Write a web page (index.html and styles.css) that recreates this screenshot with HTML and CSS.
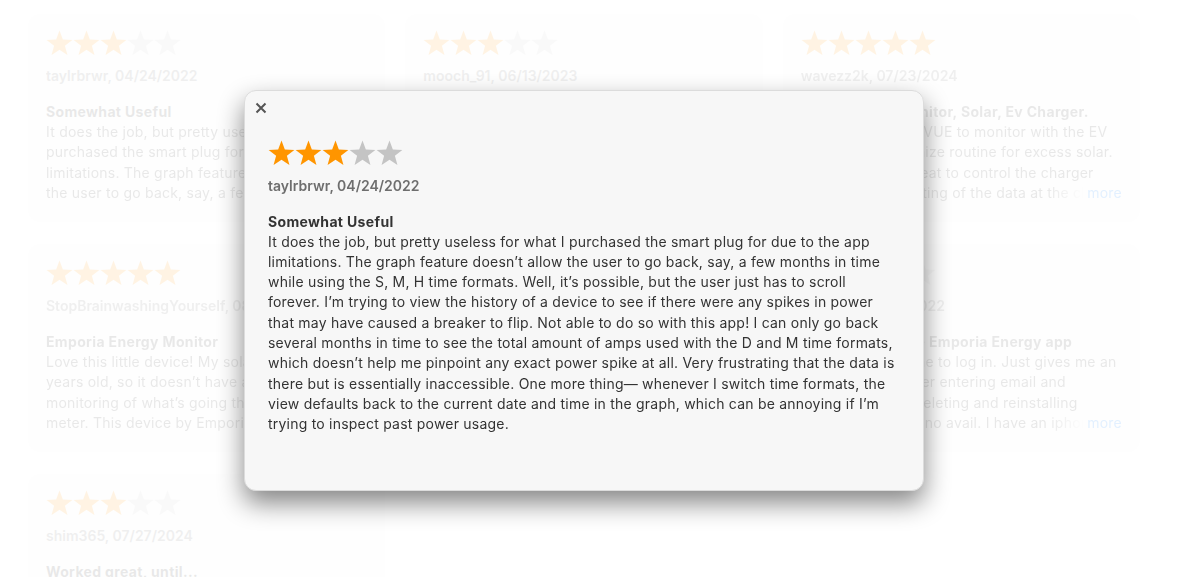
FILE: index.html
```html
<!DOCTYPE html>
<html>
    <head>
        <title>Reviews</title>
        <meta charset="utf-8" />
        <link rel="stylesheet" href="styles.css">
    </head>
    <body>
        <svg class="defs" width="0" height="0">
            <symbol id="star" viewBox="0.5 0.5 23 23">
                <polygon points="12,1 14.84,8.59 22.94,8.95 16.59,13.99 18.76,21.8 12,17.33 5.24,21.8 7.41,13.99 1.06,8.95 9.16,8.59" />
            </symbol>
        </svg>

        <div class="page">
            <div class="reviews">

                <div class="card">
                    <div class="stars">
                        <svg class="on"><use href="#star" /></svg><svg class="on"><use href="#star" /></svg><svg class="on"><use href="#star" /></svg><svg><use href="#star" /></svg><svg><use href="#star" /></svg>
                    </div>
                    <div class="author">taylrbrwr, 04/24/2022</div>
                    <div class="title">Somewhat Useful</div>
                    <div class="body">
                        <p>It does the job, but pretty useless for what I purchased the smart plug for due to the app limitations. The graph feature doesn’t allow the user to go back, say, a few months in time while using the S, M, H time formats.</p>
                        <span class="more">more</span>
                    </div>
                </div>

                <div class="card">
                    <div class="stars">
                        <svg class="on"><use href="#star" /></svg><svg class="on"><use href="#star" /></svg><svg class="on"><use href="#star" /></svg><svg><use href="#star" /></svg><svg><use href="#star" /></svg>
                    </div>
                    <div class="author">mooch_91, 06/13/2023</div>
                    <div class="title">Good hardware, app needs work</div>
                    <div class="body">
                        <p>The monitor itself installed easily and reads accurately, but the app is slow to load history and the graphs reset every time you switch views. Would be five stars with a better app.</p>
                        <span class="more">more</span>
                    </div>
                </div>

                <div class="card">
                    <div class="stars">
                        <svg class="on"><use href="#star" /></svg><svg class="on"><use href="#star" /></svg><svg class="on"><use href="#star" /></svg><svg class="on"><use href="#star" /></svg><svg class="on"><use href="#star" /></svg>
                    </div>
                    <div class="author">wavezz2k, 07/23/2024</div>
                    <div class="title">Great Energy Monitor, Solar, Ev Charger.</div>
                    <div class="body">
                        <p>I use the Emporia VUE to monitor with the EV charger and optimize routine for excess solar. The app works great to control the charger but the slow updating of the data at the cloud level is annoying.</p>
                        <span class="more">more</span>
                    </div>
                </div>

                <div class="card">
                    <div class="stars">
                        <svg class="on"><use href="#star" /></svg><svg class="on"><use href="#star" /></svg><svg class="on"><use href="#star" /></svg><svg class="on"><use href="#star" /></svg><svg class="on"><use href="#star" /></svg>
                    </div>
                    <div class="author">StopBrainwashingYourself, 08/02/2023</div>
                    <div class="title">Emporia Energy Monitor</div>
                    <div class="body">
                        <p>Love this little device! My solar system is ten years old, so it doesn’t have any real time monitoring of what’s going through the smart meter. This device by Emporia shows me everything.</p>
                        <span class="more">more</span>
                    </div>
                </div>

                <div class="card">
                    <div class="stars">
                        <svg class="on"><use href="#star" /></svg><svg class="on"><use href="#star" /></svg><svg class="on"><use href="#star" /></svg><svg class="on"><use href="#star" /></svg><svg><use href="#star" /></svg>
                    </div>
                    <div class="author">sparkyjoe, 11/05/2023</div>
                    <div class="title">Works well</div>
                    <div class="body">
                        <p>Set up took about twenty minutes and the readings line up with my utility bill. Smart plugs pair quickly and the schedules are easy to build from the app.</p>
                        <span class="more">more</span>
                    </div>
                </div>

                <div class="card">
                    <div class="stars">
                        <svg class="on"><use href="#star" /></svg><svg><use href="#star" /></svg><svg><use href="#star" /></svg><svg><use href="#star" /></svg><svg><use href="#star" /></svg>
                    </div>
                    <div class="author">kwhiz88, 09/18/2022</div>
                    <div class="title">Unable to use the Emporia Energy app</div>
                    <div class="body">
                        <p>App won’t allow me to log in. Just gives me an error message after entering email and password. Tried deleting and reinstalling repeatedly, but to no avail. I have an iphone 13 on the latest version.</p>
                        <span class="more">more</span>
                    </div>
                </div>

                <div class="card">
                    <div class="stars">
                        <svg class="on"><use href="#star" /></svg><svg class="on"><use href="#star" /></svg><svg class="on"><use href="#star" /></svg><svg><use href="#star" /></svg><svg><use href="#star" /></svg>
                    </div>
                    <div class="author">shim365, 07/27/2024</div>
                    <div class="title">Worked great, until...</div>
                    <div class="body">
                        <p>Everything worked great for the first year, then the plugs started dropping off the network every few days and need to be reset by hand.</p>
                        <span class="more">more</span>
                    </div>
                </div>

            </div>
        </div>

        <div class="overlay">
            <div class="modal">
                <button class="close" type="button">
                    <svg viewBox="0 0 12 12"><path d="M1.5 1.5l9 9M10.5 1.5l-9 9" /></svg>
                </button>
                <div class="detail">
                    <div class="stars">
                        <svg class="on"><use href="#star" /></svg><svg class="on"><use href="#star" /></svg><svg class="on"><use href="#star" /></svg><svg><use href="#star" /></svg><svg><use href="#star" /></svg>
                    </div>
                    <div class="author">taylrbrwr, 04/24/2022</div>
                    <div class="title">Somewhat Useful</div>
                    <p class="text">It does the job, but pretty useless for what I purchased the smart plug for due to the app limitations. The graph feature doesn’t allow the user to go back, say, a few months in time while using the S, M, H time formats. Well, it’s possible, but the user just has to scroll forever. I’m trying to view the history of a device to see if there were any spikes in power that may have caused a breaker to flip. Not able to do so with this app! I can only go back several months in time to see the total amount of amps used with the D and M time formats, which doesn’t help me pinpoint any exact power spike at all. Very frustrating that the data is there but is essentially inaccessible. One more thing— whenever I switch time formats, the view defaults back to the current date and time in the graph, which can be annoying if I’m trying to inspect past power usage.</p>
                </div>
            </div>
        </div>
    </body>
</html>
```

FILE: styles.css
```css
body {
    background:         #fff;
    color:              #333;
    font-family:        Inter, "Noto Sans", sans-serif;
    font-size:          14px;
    letter-spacing:     0.22px;
    margin:             0;
}

.defs {
    position:           absolute;
    width:              0;
    height:             0;
}

/* Review grid */
.page {
    padding:            14px 60px 0 28px;
    filter:             blur(0.6px);
}

.reviews {
    display:            grid;
    grid-template-columns: repeat(3, 1fr);
    column-gap:         20px;
    row-gap:            22px;
}

.card {
    background:         #f0f0f0;
    border-radius:      12px;
    padding:            16px 21px 19px 18px;
}

.stars {
    display:            flex;
    height:             27px;
}

.stars svg {
    width:              27px;
    height:             27px;
    fill:               #c4c4c4;
}

.stars svg.on {
    fill:               #ff9500;
}

.author {
    color:              #6e6e6e;
    font-weight:        600;
    letter-spacing:     0;
    line-height:        20px;
    margin-top:         9px;
    white-space:        nowrap;
    overflow:           hidden;
}

.title {
    font-weight:        700;
    letter-spacing:     0.35px;
    line-height:        20px;
    margin-top:         16px;
    white-space:        nowrap;
    overflow:           hidden;
}

.card .body {
    position:           relative;
    line-height:        1.45;
}

.card .body p {
    margin:             0;
    display:            -webkit-box;
    -webkit-box-orient: vertical;
    -webkit-line-clamp: 4;
    overflow:           hidden;
}

.card .more {
    position:           absolute;
    right:              -3px;
    bottom:             0;
    padding-left:       40px;
    color:              #007aff;
    background:         linear-gradient(to right, rgba(240, 240, 240, 0), #f0f0f0 36px);
}

/* Modal */
.overlay {
    position:           fixed;
    inset:              0;
    display:            flex;
    align-items:        center;
    justify-content:    center;
    padding:            3px 32px 0 0;
    background:         rgba(255, 255, 255, 0.89);
}

.modal {
    background:         #f7f7f7;
    border:             1px solid #dcdcdc;
    border-radius:      12px;
    box-shadow:         0 12px 26px rgba(0, 0, 0, 0.48);
    box-sizing:         border-box;
    width:              680px;
    height:             401px;
    padding:            11px 10px;
}

.close {
    display:            block;
    background:         none;
    border:             0;
    padding:            0;
    width:              12px;
    height:             12px;
}

.close svg {
    display:            block;
    width:              12px;
    height:             12px;
    stroke:             #555;
    stroke-width:       2;
}

.detail {
    padding:            26px 12px 0 13px;
}

.detail .text {
    margin:             0;
    line-height:        1.452;
}
```
